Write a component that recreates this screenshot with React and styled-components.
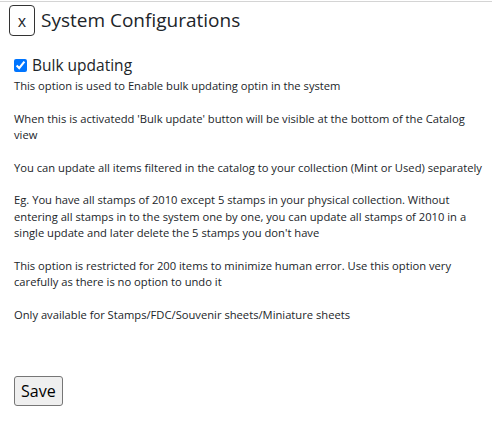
import React, { useState } from 'react'
import styled, { createGlobalStyle } from 'styled-components'

const GlobalStyle = createGlobalStyle`
  body {
    margin: 0;
    background: #fff;
    color: #212529;
    font-family: "Open Sans", "Noto Sans", sans-serif;
  }
`

const Panel = styled.div`
  border-top: 1px solid #d4d4d4;
  margin-top: 1px;
  width: 492px;
`

const Header = styled.div`
  display: flex;
  align-items: center;
  gap: 6px;
  padding: 3px 0 0 9px;
`

const CloseButton = styled.button`
  width: 26px;
  height: 31px;
  padding: 0;
  background: #fff;
  border: 1px solid #333;
  border-radius: 4px;
  font-family: "Open Sans", sans-serif;
  font-size: 16px;
  color: #212529;
`

const Title = styled.h4`
  margin: 0;
  font-size: 19px;
  font-weight: 400;
  line-height: 1.2;
`

const Body = styled.div`
  padding: 19px 0 0 14px;
`

const OptionLabel = styled.label`
  display: flex;
  align-items: center;
  gap: 5px;
  margin-bottom: 3px;
  font-size: 15.5px;
  line-height: 20px;
`

const Check = styled.input`
  width: 13px;
  height: 13px;
  margin: 0;
  accent-color: #0075ff;
`

const Text = styled.p`
  max-width: 471px;
  margin: 0 0 16px;
  font-size: 11.2px;
  line-height: 16.5px;
`

const SaveButton = styled.button`
  margin-top: 37px;
  padding: 3px 6px;
  background: #efefef;
  border: 1px solid #767676;
  border-radius: 3px;
  font-family: "Open Sans", sans-serif;
  font-size: 16px;
  color: #000;
`

export default function App() {
  const [bulk, setBulk] = useState(true)

  return (
    <>
      <GlobalStyle />
      <Panel>
        <Header>
          <CloseButton>x</CloseButton>
          <Title>System Configurations</Title>
        </Header>
        <Body>
          <OptionLabel>
            <Check type="checkbox" checked={bulk} onChange={() => setBulk(!bulk)} />
            Bulk updating
          </OptionLabel>
          <Text>This option is used to Enable bulk updating optin in the system</Text>
          <Text>When this is activatedd 'Bulk update' button will be visible at the bottom of the Catalog view</Text>
          <Text>You can update all items filtered in the catalog to your collection (Mint or Used) separately</Text>
          <Text>
            Eg. You have all stamps of 2010 except 5 stamps in your physical collection. Without entering all stamps in to the system one by one, you can update all stamps of 2010 in a single update and later delete the 5 stamps you don't have
          </Text>
          <Text>
            This option is restricted for 200 items to minimize human error. Use this option very carefully as there is no option to undo it
          </Text>
          <Text>Only available for Stamps/FDC/Souvenir sheets/Miniature sheets</Text>
          <SaveButton>Save</SaveButton>
        </Body>
      </Panel>
    </>
  )
}
